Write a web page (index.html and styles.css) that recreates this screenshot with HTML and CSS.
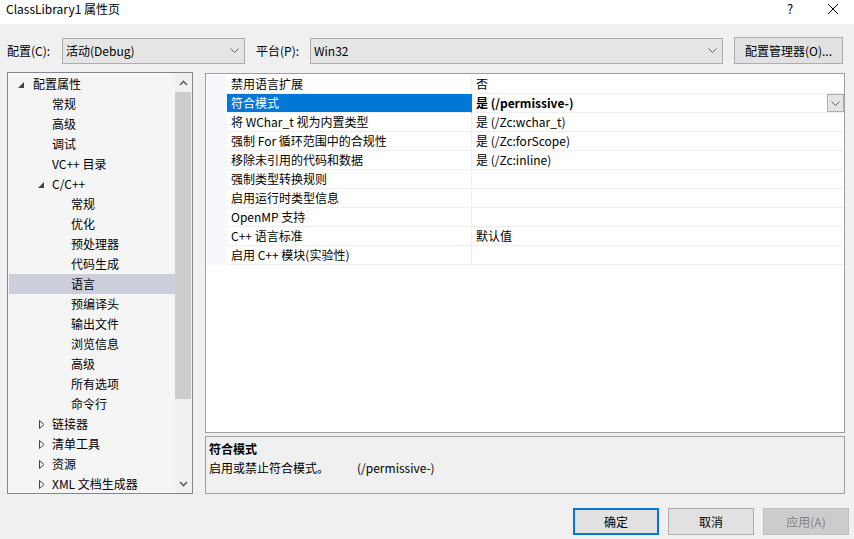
FILE: index.html
```html
<!DOCTYPE html>
<html>
<head>
  <meta charset="utf-8">
  <title>ClassLibrary1 属性页</title>
  <link rel="stylesheet" href="styles.css">
</head>
<body>
  <div class="window">
    <div class="titlebar">
      <span class="title">ClassLibrary1 属性页</span>
      <span class="help">?</span>
      <svg class="close" width="12" height="12" viewBox="0 0 12 12">
        <path d="M1 1 L11 11 M11 1 L1 11" stroke="#000" stroke-width="1" fill="none"/>
      </svg>
    </div>

    <div class="toolbar">
      <span class="tb-label label-config">配置(C):</span>
      <div class="combo combo-config">
        <span>活动(Debug)</span>
        <svg class="chev" width="9" height="5" viewBox="0 0 9 5"><path d="M0.5 0.5 L4.5 4.5 L8.5 0.5" stroke="#606060" fill="none"/></svg>
      </div>
      <span class="tb-label label-platform">平台(P):</span>
      <div class="combo combo-platform">
        <span>Win32</span>
        <svg class="chev" width="9" height="5" viewBox="0 0 9 5"><path d="M0.5 0.5 L4.5 4.5 L8.5 0.5" stroke="#606060" fill="none"/></svg>
      </div>
      <button class="btn btn-manager">配置管理器(O)...</button>
    </div>

    <div class="main">
      <div class="tree">
        <ul class="tree-list">
          <li class="lv0"><svg class="tri" width="6" height="6" viewBox="0 0 6 6"><path d="M6 0 L6 6 L0 6 Z" fill="#444"/></svg>配置属性</li>
          <li class="lv1">常规</li>
          <li class="lv1">高级</li>
          <li class="lv1">调试</li>
          <li class="lv1">VC++ 目录</li>
          <li class="lv1"><svg class="tri" width="6" height="6" viewBox="0 0 6 6"><path d="M6 0 L6 6 L0 6 Z" fill="#444"/></svg>C/C++</li>
          <li class="lv2">常规</li>
          <li class="lv2">优化</li>
          <li class="lv2">预处理器</li>
          <li class="lv2">代码生成</li>
          <li class="lv2 selected">语言</li>
          <li class="lv2">预编译头</li>
          <li class="lv2">输出文件</li>
          <li class="lv2">浏览信息</li>
          <li class="lv2">高级</li>
          <li class="lv2">所有选项</li>
          <li class="lv2">命令行</li>
          <li class="lv1"><svg class="tri-closed" width="6" height="9" viewBox="0 0 6 9"><path d="M0.5 0.5 L5 4.5 L0.5 8.5 Z" stroke="#444" fill="none"/></svg>链接器</li>
          <li class="lv1"><svg class="tri-closed" width="6" height="9" viewBox="0 0 6 9"><path d="M0.5 0.5 L5 4.5 L0.5 8.5 Z" stroke="#444" fill="none"/></svg>清单工具</li>
          <li class="lv1"><svg class="tri-closed" width="6" height="9" viewBox="0 0 6 9"><path d="M0.5 0.5 L5 4.5 L0.5 8.5 Z" stroke="#444" fill="none"/></svg>资源</li>
          <li class="lv1"><svg class="tri-closed" width="6" height="9" viewBox="0 0 6 9"><path d="M0.5 0.5 L5 4.5 L0.5 8.5 Z" stroke="#444" fill="none"/></svg>XML 文档生成器</li>
        </ul>
        <div class="scrollbar">
          <svg class="arrow" width="9" height="6" viewBox="0 0 9 6"><path d="M1 5 L4.5 1.5 L8 5" stroke="#606060" stroke-width="1.6" fill="none"/></svg>
          <div class="track"><div class="thumb"></div></div>
          <svg class="arrow" width="9" height="6" viewBox="0 0 9 6"><path d="M1 1 L4.5 4.5 L8 1" stroke="#606060" stroke-width="1.6" fill="none"/></svg>
        </div>
      </div>

      <div class="right">
        <div class="grid">
          <div class="row"><div class="gutter"></div><div class="name">禁用语言扩展</div><div class="value">否</div></div>
          <div class="row active"><div class="gutter"></div><div class="name">符合模式</div><div class="value"><b>是 (/permissive-)</b><span class="drop"><svg width="9" height="5" viewBox="0 0 9 5"><path d="M0.5 0.5 L4.5 4.5 L8.5 0.5" stroke="#606060" fill="none"/></svg></span></div></div>
          <div class="row"><div class="gutter"></div><div class="name">将 WChar_t 视为内置类型</div><div class="value">是 (/Zc:wchar_t)</div></div>
          <div class="row"><div class="gutter"></div><div class="name">强制 For 循环范围中的合规性</div><div class="value">是 (/Zc:forScope)</div></div>
          <div class="row"><div class="gutter"></div><div class="name">移除未引用的代码和数据</div><div class="value">是 (/Zc:inline)</div></div>
          <div class="row"><div class="gutter"></div><div class="name">强制类型转换规则</div><div class="value"></div></div>
          <div class="row"><div class="gutter"></div><div class="name">启用运行时类型信息</div><div class="value"></div></div>
          <div class="row"><div class="gutter"></div><div class="name">OpenMP 支持</div><div class="value"></div></div>
          <div class="row"><div class="gutter"></div><div class="name">C++ 语言标准</div><div class="value">默认值</div></div>
          <div class="row"><div class="gutter"></div><div class="name">启用 C++ 模块(实验性)</div><div class="value"></div></div>
        </div>
        <div class="desc">
          <div class="desc-title">符合模式</div>
          <div class="desc-text">启用或禁止符合模式。<span class="switch">(/permissive-)</span></div>
        </div>
      </div>
    </div>

    <div class="footer">
      <button class="btn btn-ok">确定</button>
      <button class="btn">取消</button>
      <button class="btn btn-disabled">应用(A)</button>
    </div>
  </div>
</body>
</html>
```

FILE: styles.css
```css
body {
  margin: 0;
  padding: 0;
  background-color: #f0f0f0;
  font-family: "Microsoft YaHei UI", "Noto Sans CJK SC", sans-serif;
  font-size: 12px;
  color: #000;
}

.window {
  width: 854px;
  height: 539px;
  overflow: hidden;
}

.titlebar {
  height: 24px;
  background-color: #ffffff;
  display: flex;
  align-items: flex-start;
  position: relative;
}

.titlebar .title {
  margin-left: 6px;
  margin-top: 0;
  line-height: 17px;
}

.titlebar .help {
  position: absolute;
  left: 787px;
  top: 0;
  line-height: 17px;
  font-size: 13px;
}

.titlebar .close {
  position: absolute;
  left: 827px;
  top: 3px;
}

.toolbar {
  display: flex;
  align-items: center;
  height: 27px;
  margin-top: 13px;
  padding-left: 7px;
}

.tb-label {
  line-height: 17px;
}

.label-config {
  width: 55px;
}

.label-platform {
  width: 54px;
  margin-left: 11px;
}

.combo {
  box-sizing: border-box;
  height: 26px;
  background-color: #e5e5e5;
  border: 1px solid #adadad;
  display: flex;
  align-items: center;
  justify-content: space-between;
  padding: 0 5px 0 3px;
}

.combo-config {
  width: 183px;
}

.combo-platform {
  width: 413px;
}

.btn {
  box-sizing: border-box;
  height: 27px;
  background-color: #e1e1e1;
  border: 1px solid #adadad;
  font-family: inherit;
  font-size: 12px;
  color: #000;
  padding: 0;
  margin: 0;
}

.btn-manager {
  width: 109px;
  margin-left: 11px;
}

.main {
  display: flex;
  height: 422px;
  margin-top: 8px;
}

.tree {
  box-sizing: border-box;
  width: 186px;
  margin-left: 7px;
  border: 1px solid #828790;
  background-color: #f5f5f5;
  display: flex;
  overflow: hidden;
}

.tree-list {
  list-style: none;
  margin: 0;
  padding: 1px 0 0 1px;
  flex: 1;
}

.tree-list li {
  height: 20px;
  line-height: 20px;
  white-space: nowrap;
  position: relative;
}

.tree-list .lv0 {
  padding-left: 24px;
}

.tree-list .lv1 {
  padding-left: 43px;
}

.tree-list .lv2 {
  padding-left: 62px;
}

.tree-list .selected {
  background-color: #cccedb;
}

.tree-list .tri {
  position: absolute;
  top: 8px;
  left: 9px;
}

.tree-list .lv1 .tri {
  left: 29px;
}

.tree-list .tri-closed {
  position: absolute;
  top: 6px;
  left: 30px;
}

.scrollbar {
  width: 17px;
  background-color: #f0f0f0;
  display: flex;
  flex-direction: column;
  align-items: center;
}

.scrollbar .arrow {
  margin: 7px 0 6px 0;
}

.scrollbar .track {
  flex: 1;
  width: 100%;
}

.scrollbar .thumb {
  width: 16px;
  height: 307px;
  margin-top: 0;
  background-color: #cdcdcd;
}

.right {
  display: flex;
  flex-direction: column;
  width: 640px;
  margin-left: 12px;
}

.grid {
  box-sizing: border-box;
  height: 360px;
  border: 1px solid #a0a0a0;
  background-color: #ffffff;
  padding-top: 1px;
  margin-top: 1px;
}

.row {
  display: grid;
  grid-template-columns: 21px 245px 1fr;
  height: 19px;
}

.row .gutter {
  background-color: #f7f8fb;
}

.row .name {
  border-bottom: 1px solid #f0f0f0;
  border-right: 1px solid #f0f0f0;
  padding-left: 4px;
  line-height: 18px;
  white-space: nowrap;
}

.row .value {
  border-bottom: 1px solid #f0f0f0;
  padding-left: 4px;
  line-height: 18px;
  white-space: nowrap;
  display: flex;
  align-items: center;
  justify-content: space-between;
}

.row.active .name {
  background-color: #0078d7;
  color: #ffffff;
  border-right-color: #0078d7;
}

.row .drop {
  box-sizing: border-box;
  width: 17px;
  height: 18px;
  border: 1px solid #adadad;
  background-color: #e5e5e5;
  display: flex;
  align-items: center;
  justify-content: center;
}

.desc {
  box-sizing: border-box;
  height: 58px;
  margin-top: 3px;
  border: 1px solid #a0a0a0;
  background-color: #f0f0f0;
  padding: 2px 0 0 3px;
  line-height: 19px;
}

.desc-title {
  font-weight: bold;
}

.desc .switch {
  margin-left: 28px;
}

.footer {
  display: flex;
  justify-content: flex-end;
  gap: 9px;
  margin-top: 14px;
  padding-right: 5px;
}

.footer .btn {
  width: 86px;
}

.btn-ok {
  border: 2px solid #0078d7;
}

.btn-disabled {
  background-color: #cccccc;
  border-color: #bfbfbf;
  color: #838383;
}
```
